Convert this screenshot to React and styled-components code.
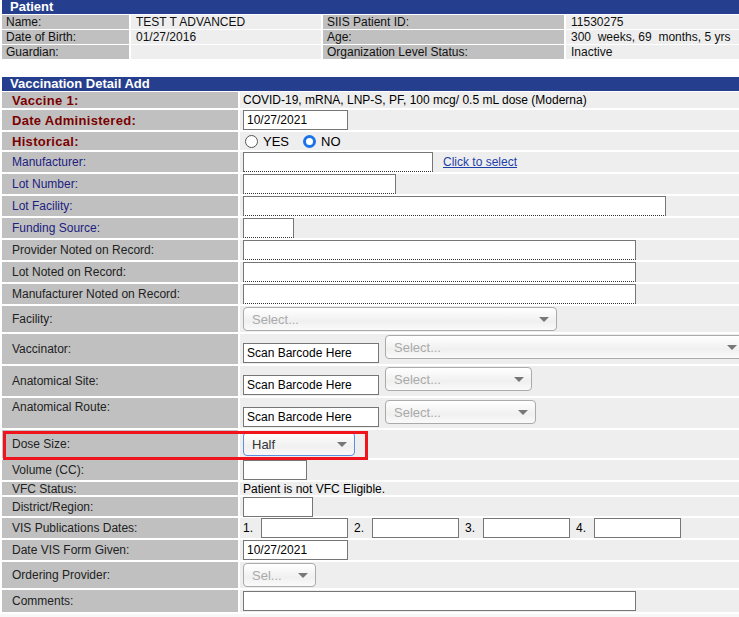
import React from "react";
import styled, { createGlobalStyle } from "styled-components";

const Global = createGlobalStyle`
  body { margin: 0; background: #fff; font-family: "Liberation Sans", Arial, sans-serif; font-size: 12px; color: #000; }
  * { box-sizing: border-box; }
`;

const Page = styled.div` width: 739px; padding-bottom: 7px; background: #f7f7f7; overflow: hidden;`;
const Header = styled.div`
  background: #253f8e; color: #fff; font-weight: bold; font-size: 13px;
  height: 14px; line-height: 14px; padding-left: 8px; margin-left: 2px;
`;
const PGrid = styled.div`
  display: grid; grid-template-columns: 127px 190px 241px 174px; column-gap: 2px; row-gap: 1px;
  padding: 1px 0 0 2px; background: #fff;
`;
const PCell = styled.div`
  background: ${p => p.$label ? "#c0c0c0" : "#eeeeee"}; height: ${p => p.$h || 14}px;
  line-height: 14px; padding-left: ${p => p.$label ? 4 : 5}px; color: #111; white-space: nowrap;
`;
const Spacer = styled.div` height: 18px; background: #fff;`;
const VGrid = styled.div`
  display: grid; grid-template-columns: 236px 499px; column-gap: 2px; padding: 1px 0 0 2px; background: #fff; row-gap: 0;
`;
const Label = styled.div`
  background: #c0c0c0; height: ${p => p.$h}px; border-bottom: 2px solid #fff;
  display: flex; align-items: ${p => p.$top ? "flex-start" : "center"}; padding-left: 10px;
  padding-top: ${p => p.$top ? 2 : 0}px;
  color: ${p => p.$req ? "#7a0000" : p.$blue ? "#202080" : "#222"};
  font-weight: ${p => p.$req ? "bold" : "normal"}; font-size: ${p => p.$req ? 13 : 12}px;
  letter-spacing: ${p => p.$req ? "0.3px" : 0};
`;
const Value = styled.div`
  background: #eeeeee; height: ${p => p.$h}px; border-bottom: 2px solid #fff;
  display: flex; align-items: ${p => p.$top ? "flex-start" : "center"}; padding-left: 3px; gap: 6px;
  padding-top: ${p => p.$top ? 2 : 0}px; position: relative; white-space: nowrap;
`;
const Input = styled.div`
  width: ${p => p.$w}px; height: ${p => p.$ih || 20}px; background: #fff; flex-shrink: 0;
  border: 1px solid #767676; border-bottom: ${p => p.$dot ? "1px dotted #333" : "1px solid #767676"};
  font-size: 12px; line-height: 18px; padding-left: 3px; color: ${p => p.$red ? "#300" : "#000"};
  margin-top: ${p => p.$mt || 0}px;
`;
const Select = styled.div`
  width: ${p => p.$w}px; height: 24px; border-radius: 4px; background: linear-gradient(#fff, #f0f0f0 60%, #fafafa);
  border: 1px solid ${p => p.$focus ? "#5b8fe0" : "#aaa"}; display: flex; align-items: center;
  justify-content: space-between; padding: 0 7px 0 8px; color: ${p => p.$focus ? "#333" : "#aaa"}; font-size: 13px;
  flex-shrink: 0; margin-top: ${p => p.$mt || 0}px;
  &::after { content: ""; border-left: 5px solid transparent; border-right: 5px solid transparent; border-top: 5px solid #777; }
`;
const Radio = styled.span`
  display: inline-block; width: 13px; height: 13px; border-radius: 50%;
  border: ${p => p.$on ? "3px solid #1a73e8" : "1px solid #555"}; background: #fff; margin: 0 5px 0 2px;
`;
const RadioLabel = styled.span` display: flex; align-items: center; font-size: 13px; margin-right: 6px; `;
const Link = styled.span` color: #1f3fa8; text-decoration: underline; font-size: 12px; margin-left: 4px;`;
const Num = styled.span` margin-right: 2px;`;
const Highlight = styled.div`
  position: absolute; left: -237px; top: 1px; width: 365px; height: 29px; border: 3px solid #f0141c;
`;

const rows = [
  ["Vaccine 1:", 18, { req: true }, <span>COVID-19, mRNA, LNP-S, PF, 100 mcg/ 0.5 mL dose (Moderna)</span>],
  ["Date Administered:", 22, { req: true }, <Input $w={105}>10/27/2021</Input>],
  ["Historical:", 20, { req: true }, <><RadioLabel><Radio />YES</RadioLabel><RadioLabel><Radio $on />NO</RadioLabel></>],
  ["Manufacturer:", 22, { blue: true }, <><Input $w={190} $dot /><Link>Click to select</Link></>],
  ["Lot Number:", 22, { blue: true }, <Input $w={153} $dot />],
  ["Lot Facility:", 22, { blue: true }, <Input $w={423} $dot />],
  ["Funding Source:", 22, { blue: true }, <Input $w={51} $dot />],
  ["Provider Noted on Record:", 22, {}, <Input $w={393} $dot />],
  ["Lot Noted on Record:", 22, {}, <Input $w={393} $dot />],
  ["Manufacturer Noted on Record:", 22, {}, <Input $w={393} $dot />],
  ["Facility:", 28, {}, <Select $w={314}>Select...</Select>],
  ["Vaccinator:", 32, {}, <><Input $w={136} $mt={8}>Scan Barcode Here</Input><Select $w={360} $mt={-4}>Select...</Select></>],
  ["Anatomical Site:", 32, {}, <><Input $w={136} $mt={8}>Scan Barcode Here</Input><Select $w={147} $mt={-4}>Select...</Select></>],
  ["Anatomical Route:", 32, { top: true }, <><Input $w={136} $mt={8}>Scan Barcode Here</Input><Select $w={151} $mt={-2}>Select...</Select></>],
  ["Dose Size:", 30, { hl: true }, <Select $w={112} $focus>Half</Select>],
  ["Volume (CC):", 22, {}, <Input $w={64} />],
  ["VFC Status:", 15, {}, <span>Patient is not VFC Eligible.</span>],
  ["District/Region:", 21, {}, <Input $w={70} />],
  ["VIS Publications Dates:", 22, {}, <><Num>1.</Num><Input $w={87} /><Num>2.</Num><Input $w={87} /><Num>3.</Num><Input $w={87} /><Num>4.</Num><Input $w={87} /></>],
  ["Date VIS Form Given:", 22, {}, <Input $w={105}>10/27/2021</Input>],
  ["Ordering Provider:", 28, {}, <Select $w={73}>Sel...</Select>],
  ["Comments:", 24, {}, <Input $w={393} />],
];

export default function App() {
  return (
    <Page>
      <Global />
      <div style={{ background: "#fff" }}>
        <Header>Patient</Header>
        <PGrid>
          <PCell $label>Name:</PCell><PCell>TEST T ADVANCED</PCell><PCell $label>SIIS Patient ID:</PCell><PCell>11530275</PCell>
          <PCell $label>Date of Birth:</PCell><PCell>01/27/2016</PCell><PCell $label>Age:</PCell><PCell>300 &nbsp;weeks, 69 &nbsp;months, 5 yrs</PCell>
          <PCell $label>Guardian:</PCell><PCell></PCell><PCell $label>Organization Level Status:</PCell><PCell>Inactive</PCell>
        </PGrid>
        <Spacer />
        <Header>Vaccination Detail Add</Header>
        <VGrid>
          {rows.map(([l, h, o, v]) => (
            <React.Fragment key={l}>
              <Label $h={h} $req={o.req} $blue={o.blue} $top={o.top}>{l}</Label>
              <Value $h={h}>{v}{o.hl && <Highlight />}</Value>
            </React.Fragment>
          ))}
        </VGrid>
      </div>
    </Page>
  );
}
